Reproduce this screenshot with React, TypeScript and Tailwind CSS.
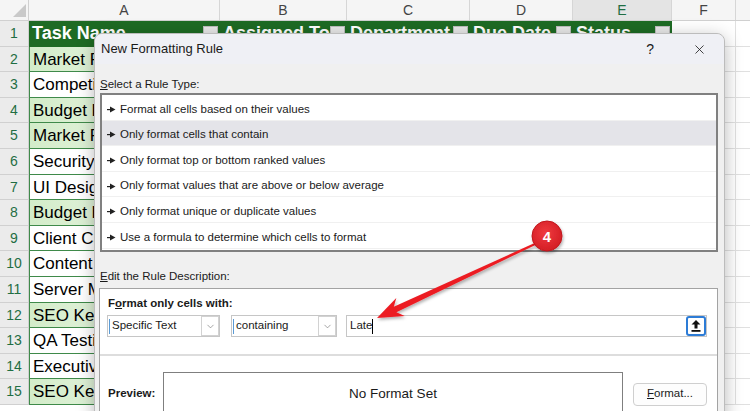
import { X, ChevronDown } from 'lucide-react';

const tasks = [
  { name: 'Market Research', green: true },
  { name: 'Competitor Analysis', green: false },
  { name: 'Budget Review', green: true },
  { name: 'Market Forecast', green: true },
  { name: 'Security Audit', green: false },
  { name: 'UI Design', green: false },
  { name: 'Budget Planning', green: true },
  { name: 'Client Call', green: false },
  { name: 'Content Plan', green: false },
  { name: 'Server Maintenance', green: false },
  { name: 'SEO Keywords', green: true },
  { name: 'QA Testing', green: false },
  { name: 'Executive Summary', green: false },
  { name: 'SEO Keywords', green: true },
];

const headers = ['Assigned To', 'Department', 'Due Date', 'Status'];
const midCols = ['w-[127px]', 'w-[123px]', 'w-[103px]', 'w-[99px]'];

const ruleTypes = [
  'Format all cells based on their values',
  'Only format cells that contain',
  'Only format top or bottom ranked values',
  'Only format values that are above or below average',
  'Only format unique or duplicate values',
  'Use a formula to determine which cells to format',
];

function Pointer() {
  return (
    <svg width="9" height="7" viewBox="0 0 9 7" className="shrink-0">
      <rect x="0" y="3" width="4" height="1.2" fill="#222" />
      <polygon points="3,0.5 8.5,3.5 3,6.5" fill="#222" />
    </svg>
  );
}

function FilterBox() {
  return <div className="ml-auto mr-[2px] w-[15px] h-[15px] bg-[#e9e9e9] border border-[#bdbdbd] shrink-0" />;
}

function Combo({ text, width }: { text: string; width: string }) {
  return (
    <div className={`h-[22px] border border-[#c6c6c6] bg-white flex items-center ${width}`}>
      <div className="w-px h-[15px] bg-[#5b9bd5] ml-[1px]" />
      <span className="ml-[2px] text-[11.5px] text-[#1a1a1a]">{text}</span>
      <div className="ml-auto w-[18px] h-[20px] border border-[#d2d2d2] flex items-center justify-center">
        <ChevronDown size={11} strokeWidth={1.3} color="#6b6b6b" />
      </div>
    </div>
  );
}

function App() {
  return (
    <div className="relative w-[750px] h-[411px] overflow-hidden bg-white font-['Liberation_Sans',Arial,sans-serif]">
      {/* spreadsheet */}
      <div className="flex flex-col">
        <div className="flex h-[21px] bg-[#f5f5f5] border-b border-[#d0d0d0]">
          <div className="w-[29px] shrink-0 border-r border-[#d0d0d0] relative">
            <svg width="29" height="21" className="absolute left-0 top-0">
              <polygon points="26,4 26,17 13,17" fill="#c9c9c9" />
            </svg>
          </div>
          <div className="w-[191px] shrink-0 border-r border-[#d6d6d6] text-center text-[14px] leading-[21px] text-[#444]">A</div>
          <div className="w-[127px] shrink-0 border-r border-[#d6d6d6] text-center text-[14px] leading-[21px] text-[#444]">B</div>
          <div className="w-[123px] shrink-0 border-r border-[#d6d6d6] text-center text-[14px] leading-[21px] text-[#444]">C</div>
          <div className="w-[103px] shrink-0 border-r border-[#d6d6d6] text-center text-[14px] leading-[21px] text-[#444]">D</div>
          <div className="w-[99px] shrink-0 border-r border-[#d6d6d6] bg-[#e4e4e4] text-center text-[14px] leading-[21px] text-[#1f6e43]">E</div>
          <div className="w-[64px] shrink-0 border-r border-[#d6d6d6] text-center text-[14px] leading-[21px] text-[#444]">F</div>
          <div className="w-[64px] shrink-0" />
        </div>

        <div className="flex h-[25.6px]">
          <div className="w-[29px] shrink-0 bg-[#ebebeb] border-r border-b border-[#d0d0d0] text-center text-[14px] leading-[25px] text-[#1f6e43]">1</div>
          <div className="w-[191px] shrink-0 bg-[#1e6b24] flex items-center pl-[3px] text-white font-bold text-[18px]">
            Task Name
            <FilterBox />
          </div>
          {headers.map((h, i) => (
            <div key={h} className={`${midCols[i]} shrink-0 bg-[#1e6b24] flex items-center pl-[3px] text-white font-bold text-[18px]`}>
              {h}
              <FilterBox />
            </div>
          ))}
          <div className="w-[64px] shrink-0 border-r border-b border-[#e0e0e0]" />
          <div className="w-[64px] shrink-0 border-b border-[#e0e0e0]" />
        </div>

        {tasks.map((t, i) => (
          <div key={i} className="flex h-[25.6px]">
            <div className="w-[29px] shrink-0 bg-[#ebebeb] border-r border-b border-[#d0d0d0] text-center text-[14px] leading-[25px] text-[#1f6e43]">
              {i + 2}
            </div>
            <div
              className={`w-[191px] shrink-0 border-l border-b border-[#3f8a4a] overflow-hidden whitespace-nowrap pl-[3px] text-[17px] leading-[25px] text-black ${
                t.green ? 'bg-gradient-to-r from-[#d3ecc9] to-[#f6fcf4]' : 'bg-white'
              }`}>
              {t.name}
            </div>
            {midCols.map((w, j) => (
              <div key={j} className={`${w} shrink-0 border-b border-[#3f8a4a]`} />
            ))}
            <div className="w-[64px] shrink-0 border-r border-b border-[#e0e0e0]" />
            <div className="w-[64px] shrink-0 border-b border-[#e0e0e0]" />
          </div>
        ))}
      </div>

      {/* dialog */}
      <div className="absolute left-[94px] top-[33px] w-[631px] h-[400px] bg-[#f0f0f0] border border-[#bcbcbc] rounded-t-[8px] shadow-[0_4px_18px_rgba(0,0,0,0.28)] text-[#1a1a1a]">
        <div className="h-[30px] bg-[#eff0f5] rounded-t-[8px] flex items-center pl-[6px] pr-[17px]">
          <span className="text-[13px]">New Formatting Rule</span>
          <span className="ml-auto text-[14px] mr-[38px]">?</span>
          <X size={15} strokeWidth={1.3} color="#1a1a1a" />
        </div>

        <div className="mt-[13px] ml-[5px] h-[14px] text-[11.5px] leading-[14px]">
          <span className="underline">S</span>elect a Rule Type:
        </div>

        <div className="mt-[2px] ml-[5px] mr-[6px] h-[159px] border-2 border-[#808080] bg-white">
          {ruleTypes.map((r, i) => (
            <div
              key={r}
              className={`h-[25.6px] flex items-center gap-[4px] pl-[5px] pt-[4px] text-[11.5px] border-b border-[#f0f0f0] ${
                i === 1 ? 'bg-[#e4e4e9]' : ''
              }`}>
              <Pointer />
              <span>{r}</span>
            </div>
          ))}
        </div>

        <div className="mt-[17px] ml-[5px] h-[14px] text-[11.5px] leading-[14px]">
          <span className="underline">E</span>dit the Rule Description:
        </div>

        <div className="mt-[5px] ml-[4px] mr-[6px] h-[200px] border border-[#a3a3a3] bg-white">
          <div className="pt-[7px] pl-[8px] h-[21px] text-[11.5px] leading-[14px] font-bold">
            F<span className="underline">o</span>rmat only cells with:
          </div>
          <div className="mt-[5px] pl-[7px] flex items-center">
            <Combo text="Specific Text" width="w-[113px]" />
            <div className="ml-[11px]">
              <Combo text="containing" width="w-[106px]" />
            </div>
            <div className="ml-[9px] w-[361px] h-[22px] border border-[#c6c6c6] bg-white flex items-center">
              <span className="ml-[3px] text-[11.5px]">Late</span>
              <div className="w-px h-[15px] bg-black" />
              <div className="ml-auto w-[20px] h-[20px] border-2 border-[#2d7cd6] rounded-[3px] bg-white flex items-center justify-center">
                <svg width="10" height="12" viewBox="0 0 10 12">
                  <polygon points="5,0 9.5,4.5 6.5,4.5 6.5,8.5 3.5,8.5 3.5,4.5 0.5,4.5" fill="#111" />
                  <rect x="0.5" y="10" width="9" height="1.8" fill="#111" />
                </svg>
              </div>
            </div>
          </div>
          <div className="mt-[17px] h-[2px] bg-[#dddddd]" />
          <div className="mt-[16px] pl-[8px] flex items-center">
            <span className="w-[55px] text-[11.5px] font-bold">Preview:</span>
            <div className="w-[460px] h-[44px] border border-[#7f7f7f] flex items-center justify-center text-[13.5px]">
              No Format Set
            </div>
            <div className="ml-[10px] w-[74px] h-[23px] border border-[#cfcfcf] rounded-[4px] bg-[#fdfdfd] flex items-center justify-center text-[11.5px]">
              <span className="underline">F</span>ormat...
            </div>
          </div>
        </div>
      </div>

      {/* annotation */}
      <svg width="750" height="411" className="absolute left-0 top-0 pointer-events-none">
        <defs>
          <filter id="sh" x="-20%" y="-20%" width="140%" height="140%">
            <feDropShadow dx="1" dy="2" stdDeviation="1.5" floodColor="#000" floodOpacity="0.3" />
          </filter>
          <radialGradient id="rg" cx="45%" cy="40%" r="60%">
            <stop offset="0%" stopColor="#ef3a3f" />
            <stop offset="100%" stopColor="#d41e25" />
          </radialGradient>
        </defs>
        <polygon
          points="377,318 396.3,297.9 393.8,306.8 534.6,243.1 535.4,244.9 396.4,312.2 404.7,316.1"
          fill="#ec1c24"
          filter="url(#sh)"
        />
        <circle cx="547" cy="236" r="15" fill="url(#rg)" stroke="#c0161d" strokeWidth="1" filter="url(#sh)" />
        <text x="547" y="241.5" textAnchor="middle" fontSize="15" fontWeight="bold" fill="#fff" fontFamily="Liberation Sans, Arial, sans-serif">
          4
        </text>
      </svg>
    </div>
  );
}

export default App;
